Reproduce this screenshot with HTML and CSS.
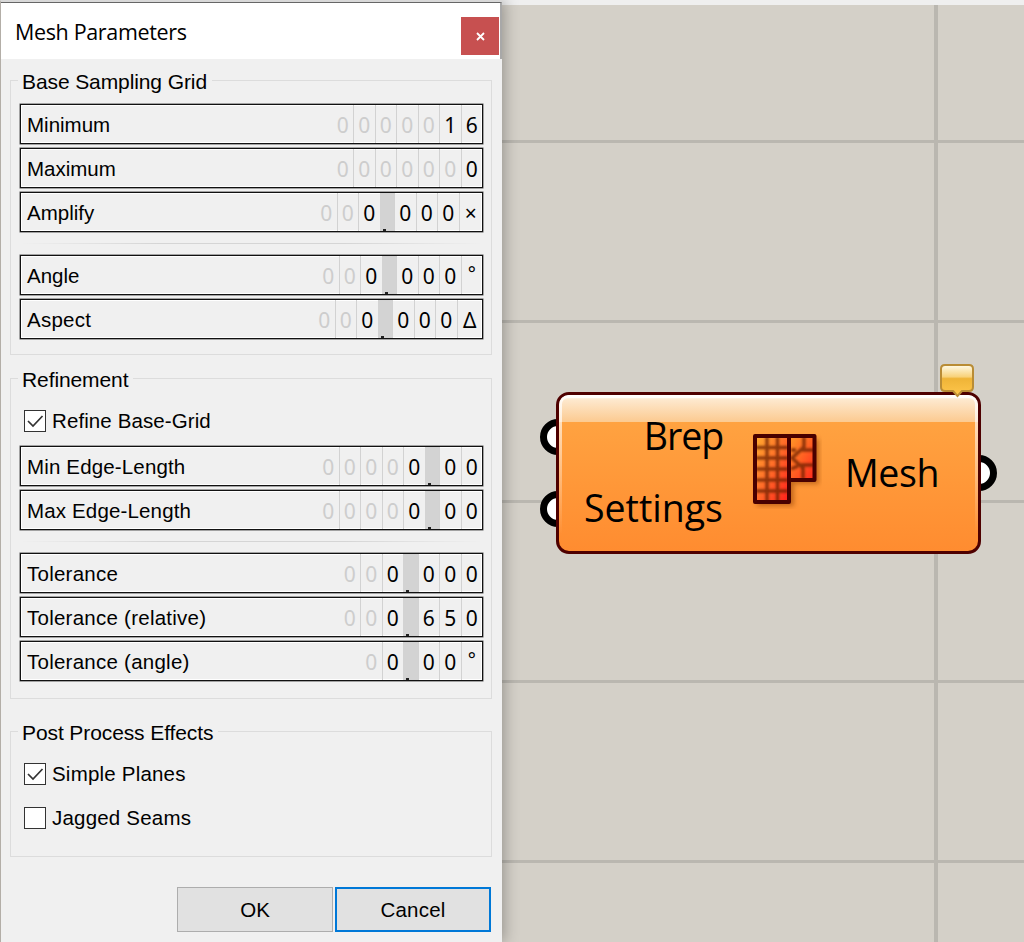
FILE: index.html
```html
<!DOCTYPE html>
<html lang="en">
<head>
    <meta charset="UTF-8">
    <title>Mesh Parameters</title>
    <link rel="stylesheet" href="styles.css">
</head>
<body>
    <div class="dialog">
        <header class="titlebar">
            <h1>Mesh Parameters</h1>
            <button class="close" aria-label="Close">
                <svg width="9" height="9" viewBox="0 0 9 9"><path d="M1 1L8 8M8 1L1 8" stroke="#fff" stroke-width="1.8"/></svg>
            </button>
        </header>

        <section class="group group-grid">
            <h2><span>Base Sampling Grid</span></h2>
            <div class="row"><label>Minimum</label><b class="off">0</b><b class="off">0</b><b class="off">0</b><b class="off">0</b><b class="off">0</b><b>1</b><b>6</b></div>
            <div class="row"><label>Maximum</label><b class="off">0</b><b class="off">0</b><b class="off">0</b><b class="off">0</b><b class="off">0</b><b class="off">0</b><b>0</b></div>
            <div class="row"><label>Amplify</label><b class="off">0</b><b class="off">0</b><b>0</b><i></i><b>0</b><b>0</b><b>0</b><b class="times">×</b></div>
            <hr>
            <div class="row"><label>Angle</label><b class="off">0</b><b class="off">0</b><b>0</b><i></i><b>0</b><b>0</b><b>0</b><b class="degree">°</b></div>
            <div class="row"><label class="wide">Aspect</label><b class="off">0</b><b class="off">0</b><b>0</b><i></i><b>0</b><b>0</b><b>0</b><b class="delta">Δ</b></div>
        </section>

        <section class="group group-refine">
            <h2><span>Refinement</span></h2>
            <div class="check">
                <span class="box"><svg width="20" height="20" viewBox="0 0 20 20"><path d="M3 10L8 15L17.5 5" fill="none" stroke="#333" stroke-width="1.7"/></svg></span>
                <span>Refine Base-Grid</span>
            </div>
            <div class="row"><label class="edge">Min Edge-Length</label><b class="off">0</b><b class="off">0</b><b class="off">0</b><b class="off">0</b><b>0</b><i></i><b>0</b><b>0</b></div>
            <div class="row"><label class="edge">Max Edge-Length</label><b class="off">0</b><b class="off">0</b><b class="off">0</b><b class="off">0</b><b>0</b><i></i><b>0</b><b>0</b></div>
            <hr>
            <div class="row"><label class="wide">Tolerance</label><b class="off">0</b><b class="off">0</b><b>0</b><i></i><b>0</b><b>0</b><b>0</b></div>
            <div class="row"><label class="wide">Tolerance (relative)</label><b class="off">0</b><b class="off">0</b><b>0</b><i></i><b>6</b><b>5</b><b>0</b></div>
            <div class="row"><label class="wide">Tolerance (angle)</label><b class="off">0</b><b>0</b><i></i><b>0</b><b>0</b><b class="degree">°</b></div>
        </section>

        <section class="group group-post">
            <h2><span>Post Process Effects</span></h2>
            <div class="check">
                <span class="box"><svg width="20" height="20" viewBox="0 0 20 20"><path d="M3 10L8 15L17.5 5" fill="none" stroke="#333" stroke-width="1.7"/></svg></span>
                <span>Simple Planes</span>
            </div>
            <div class="check">
                <span class="box"></span>
                <span>Jagged Seams</span>
            </div>
        </section>

        <footer class="buttons">
            <button class="ok">OK</button>
            <button class="cancel">Cancel</button>
        </footer>
    </div>

    <main class="canvas">
        <div class="component">
            <span class="port port-brep"></span>
            <span class="port port-settings"></span>
            <span class="port port-mesh"></span>
            <div class="capsule">
                <div class="inputs"><span class="brep">Brep</span><span>Settings</span></div>
                <svg class="icon" width="70" height="76" viewBox="0 0 70 76">
                    <defs>
                        <linearGradient id="left" x1="0" y1="0" x2="1" y2="1">
                            <stop offset="0" stop-color="#ffae30"/>
                            <stop offset=".5" stop-color="#ff6a28"/>
                            <stop offset="1" stop-color="#ff1a1a"/>
                        </linearGradient>
                        <linearGradient id="right" x1="0" y1="0" x2="1" y2="1">
                            <stop offset="0" stop-color="#ff9c28"/>
                            <stop offset="1" stop-color="#ff241c"/>
                        </linearGradient>
                        <filter id="soft"><feGaussianBlur stdDeviation="1.3"/></filter>
                        <filter id="edge"><feGaussianBlur stdDeviation=".5"/></filter>
                        <filter id="shade"><feGaussianBlur stdDeviation="2.5"/></filter>
                    </defs>
                    <path d="M5 6H67V51H42V73H5Z" fill="#8a3a00" opacity=".5" filter="url(#shade)"/>
                    <rect x="3" y="3" width="34" height="67" fill="url(#left)"/>
                    <rect x="37" y="3" width="26" height="45" fill="url(#right)"/>
                    <g stroke="#6a2000" stroke-width="3.4" fill="none" opacity=".75" filter="url(#soft)">
                        <path d="M15 4V69M25.500 4V69M4 14.500H36M4 25H36M4 36H36M4 47H36M4 58H36"/>
                        <path d="M52 4V14L40 25L51 35V46M50 17H62M39 17H44M49 32H62M39 36L46 33"/>
                    </g>
                    <path d="M3 3H62.500V47H37V69H3ZM37 3V47" fill="none" stroke="#4a0400" stroke-width="4" stroke-linejoin="round" filter="url(#edge)"/>
                </svg>
                <div class="output">Mesh</div>
            </div>
            <svg class="balloon" width="37" height="36" viewBox="0 0 37 36">
                <defs>
                    <linearGradient id="gold" x1="0" y1="0" x2="0" y2="1">
                        <stop offset="0" stop-color="#fffbe8"/>
                        <stop offset=".38" stop-color="#f8d27a"/>
                        <stop offset=".44" stop-color="#efb437"/>
                        <stop offset="1" stop-color="#ffc74d"/>
                    </linearGradient>
                </defs>
                <path d="M6 2H30Q34 2 34 6V24Q34 28 30 28H23L18.500 33L14 28H6Q2 28 2 24V6Q2 2 6 2Z" fill="url(#gold)" stroke="#b98c35" stroke-width="2"/>
            </svg>
        </div>
    </main>
</body>
</html>
```
FILE: styles.css
```css
* {
    box-sizing: border-box;
}
body {
    margin: 0;
    width: 1024px;
    height: 942px;
    display: flex;
    overflow: hidden;
    background-color: #d4d0c8;
    color: #000;
    font-family: "Liberation Sans", Arial, sans-serif;
    font-size: 20.5px;
}
h1, h2 {
    margin: 0;
    font-weight: normal;
}
button {
    padding: 0;
    font: inherit;
    color: #000;
}

/* dialog */
.dialog {
    position: relative;
    z-index: 1;
    width: 502px;
    height: 942px;
    flex: none;
    border-top: 2px solid #d8d8d8;
    border-left: 1px solid #b3aea7;
    background-color: #f0f0f0;
    box-shadow: 2px 0 14px rgba(0, 0, 0, 0.3);
}
.titlebar {
    height: 57px;
    display: flex;
    justify-content: space-between;
    padding: 0 0 0 14px;
    border-top: 1px solid #666;
    border-right: 2px solid #a8a8a8;
    background-color: #fff;
}
.titlebar h1 {
    font-family: "Open Sans", "Noto Sans", sans-serif;
    font-size: 21.5px;
    line-height: 58px;
    letter-spacing: -0.35px;
}
.close {
    width: 38px;
    height: 38px;
    margin: 14px 1px 0 0;
    border: 0;
    background-color: #c75050;
    display: flex;
    align-items: center;
    justify-content: center;
}
.group {
    width: 482px;
    margin-left: 9px;
    padding: 0 8px 0 9px;
    border: 1px solid #dcdcdc;
}
.group-grid {
    height: 275px;
    margin-top: 21px;
}
.group-refine {
    height: 321px;
    margin-top: 23px;
}
.group-post {
    height: 126px;
    margin-top: 32px;
}
.group h2 {
    height: 24px;
    margin-top: -12px;
    font-size: 21px;
    line-height: 26px;
    letter-spacing: -0.1px;
    white-space: nowrap;
}
.group h2 span {
    display: inline-block;
    margin-left: -2px;
    padding: 0 5px 0 4px;
    background-color: #f0f0f0;
}
.row {
    height: 40px;
    display: flex;
    margin-bottom: 4px;
    border: 1px solid #111;
    box-shadow: inset 0 0 0 1px #fff, 0 0 0 0.5px #555;
    line-height: 40px;
}
.group-grid h2 {
    margin-bottom: 11px;
}
.row label {
    flex: 1;
    padding-left: 6px;
    white-space: nowrap;
}
.row .wide {
    letter-spacing: 0.25px;
}
.row .edge {
    letter-spacing: 0.15px;
}
.row b {
    width: 21.5px;
    border-left: 1px solid #d2d2d2;
    font-family: "Noto Sans", "Open Sans", sans-serif;
    font-size: 21px;
    font-weight: normal;
    text-align: center;
}
.row label + b {
    border-left-color: transparent;
}
.row .off {
    color: #cdcdcd;
}
.row .times {
    width: 23.5px;
}
.row .delta {
    width: 25.5px;
}
.row .degree {
    font-size: 19px;
    line-height: 36px;
}
.row i {
    width: 14.5px;
    padding-left: 3px;
    background-color: #d3d3d3;
    display: flex;
    align-items: flex-end;
}
.row i::after {
    content: "";
    width: 3px;
    height: 2px;
    background-color: #222;
}
hr {
    height: 1px;
    margin: 11px 0 11px;
    border: 0;
    background: linear-gradient(90deg, #f0f0f0, #d5d5d5 30%, #d5d5d5 70%, #f0f0f0);
}
.check {
    height: 44px;
    display: flex;
    align-items: center;
    padding-left: 4px;
    gap: 6px;
    letter-spacing: 0.1px;
    white-space: nowrap;
}
.group-refine .check {
    margin: 8px 0 3px;
}
.group-post .check:nth-of-type(1) {
    margin-top: 8px;
}
.group-post .check {
    letter-spacing: 0.2px;
}
.box {
    width: 22px;
    height: 22px;
    display: flex;
    border: 1.5px solid #333;
    background-color: #fff;
}
.buttons {
    display: flex;
    gap: 2px;
    margin: 30px 0 0 176px;
}
.buttons button {
    width: 156px;
    height: 45px;
    border: 1px solid #adadad;
    background-color: #e1e1e1;
}
.buttons .cancel {
    border: 2px solid #0078d7;
    letter-spacing: 0.2px;
}

/* canvas */
.canvas {
    flex: 1;
    position: relative;
    border-top: 5px solid #efefef;
    background:
        linear-gradient(#bab7b0, #bab7b0) 432px 0 / 4px 100% no-repeat,
        repeating-linear-gradient(transparent 0 135px, #bab7b0 135px 138px, transparent 138px 180px);
}
.component {
    position: absolute;
    left: 54px;
    top: 387px;
    width: 425px;
    height: 162px;
}
.port {
    position: absolute;
    width: 36px;
    height: 36px;
    border: 7px solid #000;
    border-radius: 50%;
    background-color: #fff;
}
.port-brep {
    left: -16px;
    top: 27px;
}
.port-settings {
    left: -16px;
    top: 99px;
}
.port-mesh {
    right: -16px;
    top: 63px;
}
.capsule {
    position: relative;
    height: 162px;
    display: flex;
    align-items: center;
    border: 3.5px solid #4e0000;
    border-radius: 13px;
    background:
        linear-gradient(#fff 0, #fde8cd 5px, #fcca90 27px, transparent 27px),
        linear-gradient(#ffa744, #ff8c30);
    font-family: "Open Sans", "Noto Sans", sans-serif;
    font-size: 37.5px;
}
.capsule::before {
    content: "";
    position: absolute;
    inset: 0;
    border: 3px solid rgba(255, 255, 255, 0.8);
    border-bottom: 0;
    border-radius: 9px;
    -webkit-mask-image: linear-gradient(#000, transparent 90%);
    mask-image: linear-gradient(#000, transparent 90%);
}
.inputs {
    width: 164px;
    display: flex;
    flex-direction: column;
    margin-top: -2px;
    text-align: right;
    line-height: 72px;
}
.brep {
    letter-spacing: -1.1px;
}
.icon {
    flex: none;
    margin: -4px 0 0 29px;
}
.output {
    margin: -2px 0 0 23px;
    letter-spacing: -0.4px;
}
.balloon {
    position: absolute;
    left: 383px;
    top: -29px;
}
```
